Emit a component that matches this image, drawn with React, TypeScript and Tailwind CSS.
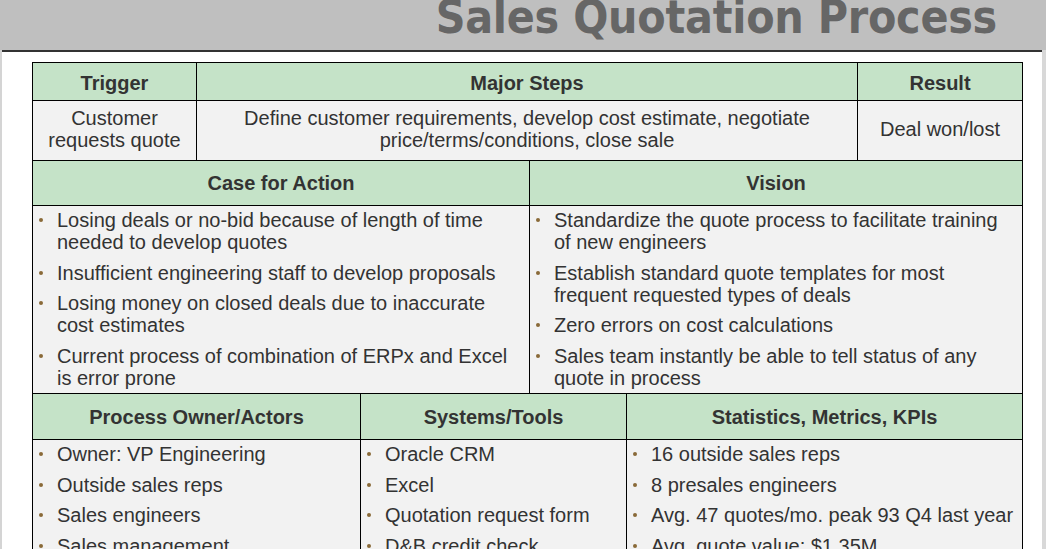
import React from "react";

const Bullets = ({ items }: { items: string[] }) => (
  <ul className="flex flex-col gap-[8.5px]">
    {items.map((t, i) => (
      <li key={i} className="relative pl-[24px] pr-1 leading-[22px]">
        <span className="absolute left-[6px] top-[9px] h-[4px] w-[4px] rounded-full bg-[#8a6a38]" />
        {t}
      </li>
    ))}
  </ul>
);

export default function App() {
  return (
    <div
      className="w-[1046px] h-[549px] overflow-hidden bg-white text-[#333333]"
      style={{ fontFamily: '"Liberation Sans", Arial, sans-serif' }}
    >
      <div className="h-[50px] bg-[#bfbfbf] flex justify-end items-start pr-[49px] overflow-hidden">
        <div
          className="text-[#666666] font-bold text-[46px] leading-none mt-[-6px] tracking-[-0.25px]"
          style={{ fontFamily: '"DejaVu Sans Condensed", "DejaVu Sans", sans-serif' }}
        >
          Sales Quotation Process
        </div>
      </div>
      <div className="flex h-[499px] overflow-hidden">
        <div className="w-[2px] shrink-0 bg-[#d4d4d4]" />
        <div className="flex-1 flex flex-col min-h-0">
          <div className="h-[2px] shrink-0 bg-[#333333]" />
          <div className="flex-1 min-h-0 pt-[10px] pl-[30px]">
            <div className="w-[991px] border-l border-t border-black text-[20px]">
              <div className="flex h-[38px] bg-[#c5e3c8] font-bold">
                <div className="w-[164px] border-r border-b border-black flex items-center justify-center pt-[2px]">Trigger</div>
                <div className="w-[661px] border-r border-b border-black flex items-center justify-center pt-[2px]">Major Steps</div>
                <div className="flex-1 border-r border-b border-black flex items-center justify-center pt-[2px]">Result</div>
              </div>
              <div className="flex h-[60px] bg-[#f2f2f2] leading-[22px] text-center">
                <div className="w-[164px] border-r border-b border-black flex items-center justify-center pb-[3px]">Customer<br />requests quote</div>
                <div className="w-[661px] border-r border-b border-black flex items-center justify-center px-8 pb-[3px]">Define customer requirements, develop cost estimate, negotiate price/terms/conditions, close sale</div>
                <div className="flex-1 border-r border-b border-black flex items-center justify-center pb-[3px]">Deal won/lost</div>
              </div>
              <div className="flex h-[45px] bg-[#c5e3c8] font-bold">
                <div className="w-[497px] border-r border-b border-black flex items-center justify-center">Case for Action</div>
                <div className="flex-1 border-r border-b border-black flex items-center justify-center">Vision</div>
              </div>
              <div className="flex h-[188px] bg-[#f2f2f2]">
                <div className="w-[497px] border-r border-b border-black pt-[3px]">
                  <Bullets
                    items={[
                      "Losing deals or no-bid because of length of time needed to develop quotes",
                      "Insufficient engineering staff to develop proposals",
                      "Losing money on closed deals due to inaccurate cost estimates",
                      "Current process of combination of ERPx and Excel is error prone",
                    ]}
                  />
                </div>
                <div className="flex-1 border-r border-b border-black pt-[3px]">
                  <Bullets
                    items={[
                      "Standardize the quote process to facilitate training of new engineers",
                      "Establish standard quote templates for most frequent requested types of deals",
                      "Zero errors on cost calculations",
                      "Sales team instantly be able to tell status of any quote in process",
                    ]}
                  />
                </div>
              </div>
              <div className="flex h-[46px] bg-[#c5e3c8] font-bold">
                <div className="w-[328px] border-r border-b border-black flex items-center justify-center">Process Owner/Actors</div>
                <div className="w-[266px] border-r border-b border-black flex items-center justify-center">Systems/Tools</div>
                <div className="flex-1 border-r border-b border-black flex items-center justify-center">Statistics, Metrics, KPIs</div>
              </div>
              <div className="flex h-[160px] bg-[#f2f2f2]">
                <div className="w-[328px] border-r border-black pt-[3px]">
                  <Bullets items={["Owner: VP Engineering", "Outside sales reps", "Sales engineers", "Sales management"]} />
                </div>
                <div className="w-[266px] border-r border-black pt-[3px]">
                  <Bullets items={["Oracle CRM", "Excel", "Quotation request form", "D&B credit check"]} />
                </div>
                <div className="flex-1 border-r border-black pt-[3px]">
                  <Bullets items={["16 outside sales reps", "8 presales engineers", "Avg. 47 quotes/mo. peak 93 Q4 last year", "Avg. quote value: $1.35M"]} />
                </div>
              </div>
            </div>
          </div>
        </div>
        <div className="w-[4px] shrink-0 bg-[#d8d8d8]" />
      </div>
    </div>
  );
}
